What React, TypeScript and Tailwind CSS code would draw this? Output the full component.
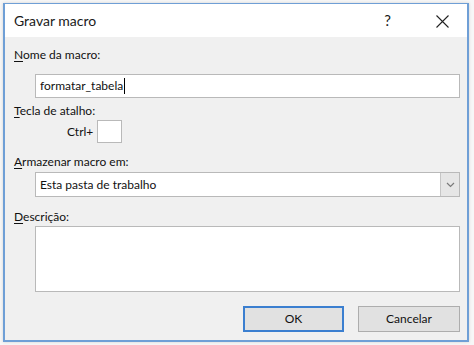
import React from "react";

const font = { fontFamily: 'Lato, "Noto Sans", sans-serif' };

function U({ c }: { c: string }) {
  return <span className="underline underline-offset-2 decoration-1">{c}</span>;
}

export default function App() {
  return (
    <div className="w-[474px] h-[345px] bg-[#f7f7f7] pt-[3px] pl-[3px]" style={font}>
      <div className="w-[466px] h-[339px] border border-[#6f9fd6] border-l-2 border-b-2 border-r-2 bg-[#f0f0f0] flex flex-col shadow-[0_0_3px_rgba(0,0,0,0.15)]">
        {/* Title bar */}
        <div className="h-[33px] bg-white flex items-center pl-[9px] pr-[18px] text-[#1a1a1a]">
          <span className="text-[14px] leading-none">Gravar macro</span>
          <span className="ml-auto text-[15px] leading-none mr-[45px]">?</span>
          <svg width="13" height="13" viewBox="0 0 13 13" className="mt-[1px]">
            <path d="M0.5 0.5 L12.5 12.5 M12.5 0.5 L0.5 12.5" stroke="#222" strokeWidth="1.1" />
          </svg>
        </div>
        {/* Content */}
        <div className="flex flex-col pl-[9px] pr-[7px] text-[12px] text-[#111]">
          <div className="mt-[10px] leading-[16px]">
            <U c="N" />ome da macro:
          </div>
          <div className="mt-[11px] ml-[21px] h-[24px] bg-white border border-[#b9b9b9] flex items-center pl-[4px] leading-none">
            <span>formatar_tabela</span>
            <span className="w-px h-[16px] bg-black ml-[1px]" />
          </div>
          <div className="mt-[5px] leading-[16px]">
            <U c="T" />ecla de atalho:
          </div>
          <div className="flex items-center ml-[53px] mt-[1px]">
            <span className="leading-none w-[26px]">Ctrl+</span>
            <div className="ml-[4px] w-[25px] h-[23px] bg-white border border-[#b9b9b9]" />
          </div>
          <div className="mt-[11px] leading-[16px]">
            <U c="A" />rmazenar macro em:
          </div>
          <div className="mt-[2px] ml-[21px] h-[25px] bg-white border border-[#b9b9b9] flex items-stretch">
            <span className="flex-1 flex items-center pl-[4px] leading-none">Esta pasta de trabalho</span>
            <div className="w-[19px] bg-[#e6e6e6] border-l border-[#c6c6c6] flex items-center justify-center">
              <svg width="9" height="6" viewBox="0 0 9 6">
                <path d="M1 1 L4.5 4.5 L8 1" fill="none" stroke="#7a7a7a" strokeWidth="1.2" />
              </svg>
            </div>
          </div>
          <div className="mt-[12px] leading-[16px]">
            <U c="D" />escrição:
          </div>
          <div className="mt-[1px] ml-[21px] h-[66px] bg-white border border-[#b9b9b9]" />
          <div className="mt-[14px] flex justify-end gap-[14px]">
            <button className="w-[101px] h-[26px] bg-[#e1e1e1] border-2 border-[#3b7fd0] text-[12px] leading-none text-[#111]">
              OK
            </button>
            <button className="w-[102px] h-[26px] bg-[#e1e1e1] border border-[#adadad] text-[12px] leading-none text-[#111]">
              Cancelar
            </button>
          </div>
        </div>
      </div>
    </div>
  );
}
